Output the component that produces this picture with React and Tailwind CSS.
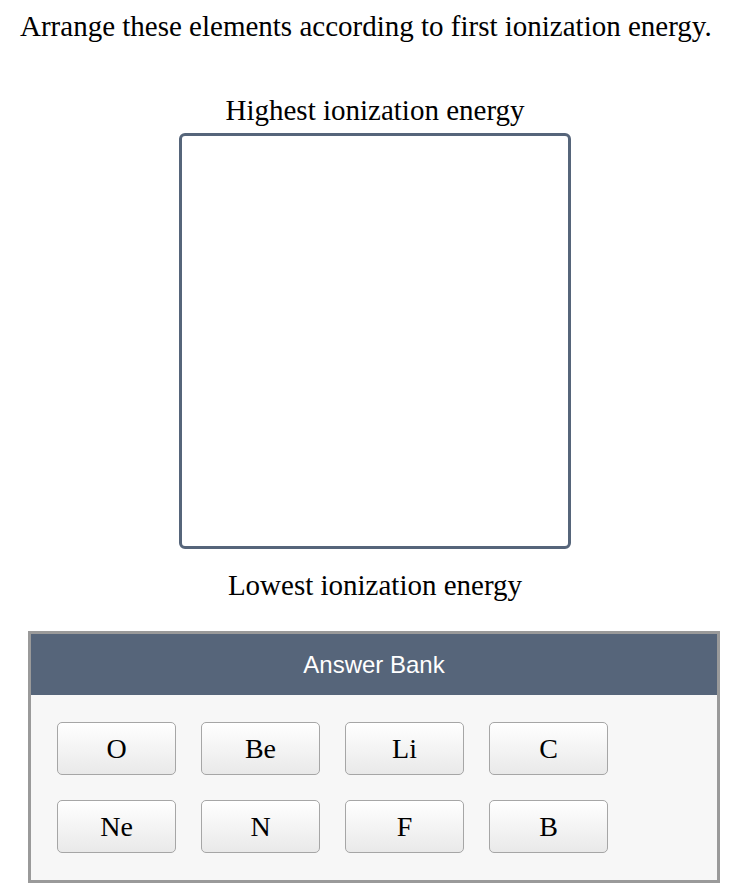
export default function App() {
  const row1 = ["O", "Be", "Li", "C"];
  const row2 = ["Ne", "N", "F", "B"];
  const Btn = ({ label }) => (
    <div className="w-[119px] h-[53px] flex items-center justify-center rounded-[5px] border-[1.5px] border-[#a6a6a6] bg-gradient-to-b from-[#ffffff] to-[#e9e9e9] text-[28px] text-black">
      {label}
    </div>
  );
  return (
    <div className="w-[750px] h-[896px] bg-white text-black" style={{ fontFamily: '"Liberation Serif", "Times New Roman", serif' }}>
      <div className="pt-[10px] pl-[20px] text-[29px] leading-[32px]">
        Arrange these elements according to first ionization energy.
      </div>
      <div className="flex flex-col items-center mt-[52px]">
        <div className="text-[29px] leading-[32px]">Highest ionization energy</div>
        <div className="mt-[7px] w-[392px] h-[416px] border-[3px] border-[#56657a] rounded-[6px] bg-white"></div>
        <div className="mt-[20px] text-[29px] leading-[32px]">Lowest ionization energy</div>
      </div>
      <div className="ml-[28px] mt-[30px] w-[692px] h-[252px] border-[3px] border-[#9a9a9a] bg-[#f7f7f7] flex flex-col">
        <div className="h-[61px] bg-[#56657a] flex items-center justify-center text-white text-[24px]" style={{ fontFamily: '"Liberation Sans", Arial, sans-serif' }}>
          Answer Bank
        </div>
        <div className="flex flex-col gap-[25px] pt-[27px] pl-[26px]">
          <div className="flex gap-[25px]">
            {row1.map((l) => <Btn key={l} label={l} />)}
          </div>
          <div className="flex gap-[25px]">
            {row2.map((l) => <Btn key={l} label={l} />)}
          </div>
        </div>
      </div>
    </div>
  );
}
